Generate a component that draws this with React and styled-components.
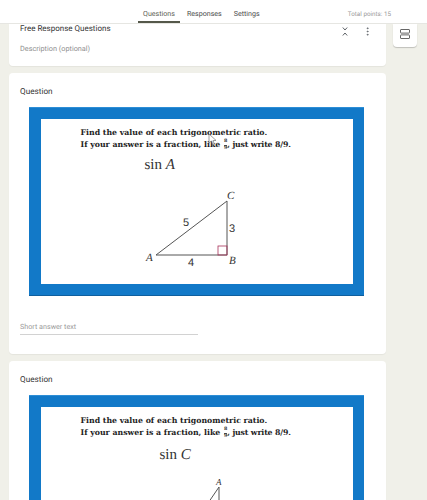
import React from 'react';
import styled, { createGlobalStyle } from 'styled-components';
import { EllipsisVertical } from 'lucide-react';

const GlobalStyle = createGlobalStyle`
    html, body {
        margin: 0;
        padding: 0;
        height: 500px;
        overflow: hidden;
        background-color: #f0f0e9;
        font-family: Roboto, "Liberation Sans", sans-serif;
        text-rendering: geometricPrecision;
    }
`

const Header = styled.div`
    height: 23px;
    background-color: #fff;
    border-bottom: 1px solid #e6e6e2;
    display: flex;
    align-items: stretch;
`

const Tabs = styled.div`
    display: flex;
    margin-left: 138px;
`

const Tab = styled.div`
    padding: 0 5px;
    margin-right: 2px;
    font-size: 7.1px;
    line-height: 28px;
    height: 23px;
    box-sizing: border-box;
    color: ${props => props.$active ? '#5e6256' : '#4a4a4a'};
    border-bottom: ${props => props.$active ? '2px solid #55584a' : 'none'};
`

const Points = styled.div`
    margin-left: auto;
    margin-right: 36px;
    font-size: 6.3px;
    line-height: 28px;
    color: #9a9a9a;
`

const Body = styled.div`
    display: flex;
    align-items: flex-start;
    padding-left: 9px;
`

const Column = styled.div`
    width: 377px;
    display: flex;
    flex-direction: column;
    gap: 7px;
`

const Card = styled.div`
    background-color: #fff;
    border-radius: ${props => props.$top ? '0 0 4px 4px' : '4px'};
    box-shadow: 0 1px 1px rgba(0, 0, 0, 0.05);
    padding: ${props => props.$top ? '0 7px 0 11px' : '13px 11px 0'};
    height: ${props => props.$height}px;
    box-sizing: border-box;
`

const TitleRow = styled.div`
    display: flex;
    align-items: flex-start;
    height: 20px;
`

const SectionTitle = styled.div`
    flex: 1;
    font-size: 8px;
    line-height: 10px;
    color: #333;
`

const IconSlot = styled.div`
    width: 23px;
    height: 14px;
    display: flex;
    align-items: center;
    justify-content: center;
    color: #5f6368;
`

const Description = styled.div`
    font-size: 7.3px;
    line-height: 10px;
    color: #8f8f8f;
`

const QuestionLabel = styled.div`
    font-size: 8.2px;
    line-height: 12px;
    color: #333;
    margin-bottom: 9px;
`

const Frame = styled.div`
    position: relative;
    margin-left: 9px;
    width: 335px;
    height: 189px;
    box-sizing: border-box;
    padding: 11px 11px 11px 11.5px;
    background-color: #1279c8;
    border-top: 1px solid #2d8ed6;
    border-bottom: 1px solid #0f5f9e;
`

const Sheet = styled.div`
    background-color: #fff;
    height: 165px;
    padding: 8px 0 0 40px;
    box-sizing: border-box;
`

const Prompt = styled.div`
    font-family: "DejaVu Serif", "Liberation Serif", serif;
    font-weight: bold;
    font-size: 7.8px;
    line-height: 12px;
    color: #1e1e1e;
    white-space: nowrap;
`

const PromptTail = styled.span`
    letter-spacing: -0.16px;
`

const Fraction = styled.span`
    display: inline-flex;
    flex-direction: column;
    align-items: center;
    vertical-align: middle;
    font-size: 4.8px;
    line-height: 5.5px;
    margin-left: 1px;
    & > b:first-child {
        border-bottom: 1px solid #555;
    }
`

const Ratio = styled.div`
    font-family: "Liberation Serif", serif;
    font-size: 15px;
    line-height: 18px;
    color: #333;
    margin: ${props => props.$top}px 0 0 ${props => props.$left}px;
`

const Figure = styled.svg`
    display: block;
    margin: ${props => props.$margin};
    overflow: visible;
`

const Pointer = styled.svg`
    position: absolute;
    left: 179px;
    top: 25px;
`

const AnswerField = styled.div`
    margin-top: 26px;
    width: 178px;
    height: 12px;
    font-size: 7.2px;
    line-height: 10px;
    color: #9a9a9a;
    border-bottom: 1px solid #d2d2d2;
`

const SidePanel = styled.div`
    width: 24px;
    height: 23px;
    margin-left: 7px;
    padding-bottom: 4px;
    box-sizing: border-box;
    background-color: #fff;
    border-radius: 0 0 4px 4px;
    box-shadow: 0 1px 1px rgba(0, 0, 0, 0.2);
    display: flex;
    align-items: center;
    justify-content: center;
`

const CollapseIcon = () => (
    <svg width="6" height="9" viewBox="0 0 6 9" fill="none" stroke="#5f6368" strokeWidth="1">
        <path d="M0.8 0.5 L3 3 L5.2 0.5" />
        <path d="M0.8 8.5 L3 6 L5.2 8.5" />
    </svg>
);

const SectionIcon = () => (
    <svg width="10" height="10" viewBox="0 0 10 10" fill="none" stroke="#666" strokeWidth="1">
        <rect x="0.5" y="0.5" width="9" height="3.6" rx="0.5" />
        <rect x="0.5" y="5.9" width="9" height="3.6" rx="0.5" />
    </svg>
);

const TriangleAB = () => (
    <Figure width="120" height="84" viewBox="0 0 120 84" $margin="23px 0 0 68px">
        <path d="M7 58 L78 4 L78 58 Z" fill="none" stroke="#555" strokeWidth="1" />
        <rect x="69" y="49" width="9" height="9" fill="none" stroke="#a8325a" strokeWidth="0.8" />
        <text x="-3" y="64" fontFamily="Liberation Serif" fontStyle="italic" fontSize="11" fill="#333">A</text>
        <text x="78" y="2" fontFamily="Liberation Serif" fontStyle="italic" fontSize="11" fill="#333">C</text>
        <text x="80" y="67" fontFamily="Liberation Serif" fontStyle="italic" fontSize="11" fill="#333">B</text>
        <text x="34" y="29" fontFamily="Liberation Sans" fontSize="11" fill="#333">5</text>
        <text x="80" y="35" fontFamily="Liberation Sans" fontSize="11" fill="#333">3</text>
        <text x="39" y="69" fontFamily="Liberation Sans" fontSize="11" fill="#333">4</text>
    </Figure>
);

const TriangleCut = () => (
    <Figure width="40" height="40" viewBox="0 0 40 40" $margin="9px 0 0 111px">
        <path d="M27 14 L12 36 M27 14 L27 40" fill="none" stroke="#555" strokeWidth="1" />
        <text x="24" y="11.5" fontFamily="Liberation Serif" fontStyle="italic" fontSize="9" fill="#333">A</text>
    </Figure>
);

const Question = ({ height, label, left, top, cursor, children }) => (
    <Card $height={height}>
        <QuestionLabel>Question</QuestionLabel>
        <Frame>
            <Sheet>
                <Prompt>Find the value of each trigonometric ratio.</Prompt>
                <Prompt>
                    If your answer is a fraction, like <Fraction><b>8</b><b>9</b></Fraction><PromptTail>, just write 8/9.</PromptTail>
                </Prompt>
                <Ratio $left={left} $top={top}>sin <i>{label}</i></Ratio>
                {children}
            </Sheet>
            {cursor && (
                <Pointer width="9" height="13" viewBox="0 0 9 13">
                    <path d="M1 1 L1 10 L3.4 8 L5 12 L6.5 11.4 L5 7.6 L8 7.4 Z" fill="rgba(255,255,255,0.55)" stroke="#777" strokeWidth="0.7" />
                </Pointer>
            )}
        </Frame>
        {cursor && <AnswerField>Short answer text</AnswerField>}
    </Card>
);

const App = () => {
    return (
        <>
            <GlobalStyle />
            <Header>
                <Tabs>
                    <Tab $active>Questions</Tab>
                    <Tab>Responses</Tab>
                    <Tab>Settings</Tab>
                </Tabs>
                <Points>Total points: 15</Points>
            </Header>
            <Body>
                <Column>
                    <Card $top $height={42}>
                        <TitleRow>
                            <SectionTitle>Free Response Questions</SectionTitle>
                            <IconSlot><CollapseIcon /></IconSlot>
                            <IconSlot><EllipsisVertical size={11} strokeWidth={1.8} /></IconSlot>
                        </TitleRow>
                        <Description>Description (optional)</Description>
                    </Card>
                    <Question height={281} label="A" left={64} top={5} cursor>
                        <TriangleAB />
                    </Question>
                    <Question height={160} label="C" left={79} top={7}>
                        <TriangleCut />
                    </Question>
                </Column>
                <SidePanel><SectionIcon /></SidePanel>
            </Body>
        </>
    );
}

export default App
